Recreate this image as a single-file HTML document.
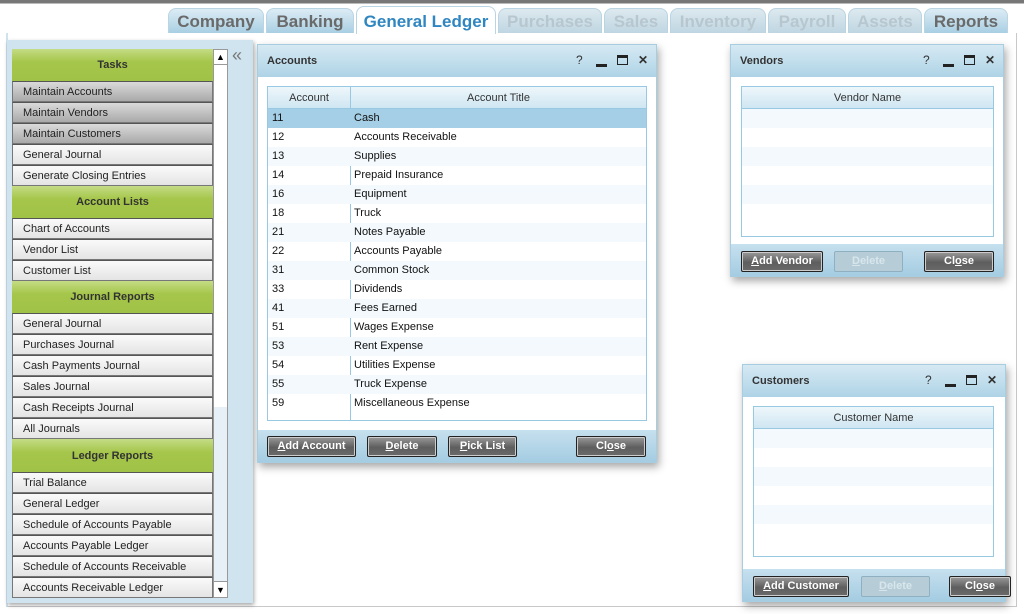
<!DOCTYPE html>
<html><head><meta charset="utf-8"><style>
*{margin:0;padding:0;box-sizing:border-box}
body{width:1024px;height:614px;background:#fff;font-family:"Liberation Sans",sans-serif;position:relative;overflow:hidden}
.abs{position:absolute}
.tab{position:absolute;top:8px;height:25px;border-radius:8px 8px 0 0;background:linear-gradient(#dcecf5,#a9cfe3);border:1px solid #b9d4e3;border-bottom:none;font-weight:bold;font-size:17px;text-align:center;line-height:25px;color:#6a6a6a}
.tab.dis{color:#b8c7cf;background:linear-gradient(#dde9ef,#bfd6e2)}
.tab.act{background:#fff;color:#2f86c0;top:6px;height:28px;line-height:29px}
.main{position:absolute;left:6px;top:33px;width:1011px;height:574px;border:1px solid #c8c8c8;border-top:none;border-left:2px solid #cfe3ef;background:#fff}
.side{position:absolute;left:7px;top:40px;width:246px;height:563px;background:#d0e4f0;box-shadow:1px 2px 4px rgba(0,0,0,.35)}
.list{position:absolute;left:12px;top:49px;width:216px;height:549px;background:#fff}
.hdr{position:absolute;left:12px;width:201px;height:32px;background:linear-gradient(#c4dc86,#a5c64b 40%,#a0c246);font-weight:bold;font-size:11px;color:#333;text-align:center;line-height:33px}
.it{position:absolute;left:12px;width:201px;height:21px;background:linear-gradient(#fafafa,#e4e4e4);border:1px solid #777;border-top:1px solid #555;font-size:11px;color:#222;padding-left:10px;line-height:20px}
.it.g{background:linear-gradient(#dadada,#a9a9a9)}
.win{position:absolute;background:#fff;box-shadow:2px 4px 8px rgba(0,0,0,.35);border:1px solid #a7cde0}
.tb{position:absolute;left:0;right:0;top:0;height:32px;background:linear-gradient(#d6e9f3,#aed3e6);font-weight:bold;font-size:11px;color:#333;line-height:32px;padding-left:9px}
.ctl{position:absolute;top:0;right:10px;width:70px;height:32px}
.ctl .q{position:absolute;left:0;top:0;font-weight:normal;font-size:12px;line-height:30px}
.ctl .mn{position:absolute;left:20px;top:19px;width:11px;height:3px;background:#222}
.ctl .mx{position:absolute;left:41px;top:10px;width:11px;height:10px;border:1.5px solid #222;border-top-width:3px}
.ctl .x{position:absolute;left:62px;top:0;font-size:12px;line-height:30px}
.bb{position:absolute;left:0;right:0;bottom:0;height:32px;background:linear-gradient(#c6e0ee,#a4cce2)}
.btn{position:absolute;height:21px;border:1px solid #222;border-radius:2px;background:linear-gradient(#9a9a9a,#5e5e5e 55%,#6a6a6a);color:#fff;font-weight:bold;font-size:11px;text-align:center;line-height:19px;box-shadow:inset 0 0 0 1px #ccc}
.btn.d{background:#b6cdd8;border-color:#8fb0c0;color:#d8e6ec;box-shadow:none}
.tbl{position:absolute;border:1px solid #98c9e2;background:#fff}
.th{height:22px;background:linear-gradient(#eef7fb,#cfe6f2);border-bottom:1px solid #98c9e2;font-size:11px;color:#333;text-align:center;line-height:22px}
.row{height:19px;font-size:11px;color:#111;line-height:19px;position:relative}
.row:nth-child(odd){background:#f3f9fc}
u{text-decoration:underline}
</style></head><body>
<div class="abs" style="left:0;top:0;width:1024px;height:3px;background:#777"></div>
<div class="abs" style="left:0;top:3px;width:1024px;height:1px;background:#bbb"></div>
<div class="main"></div>
<div class="tab" style="left:168px;width:96px">Company</div>
<div class="tab" style="left:266px;width:88px">Banking</div>
<div class="tab act" style="left:356px;width:140px">General Ledger</div>
<div class="tab dis" style="left:498px;width:104px">Purchases</div>
<div class="tab dis" style="left:604px;width:64px">Sales</div>
<div class="tab dis" style="left:670px;width:96px">Inventory</div>
<div class="tab dis" style="left:768px;width:78px">Payroll</div>
<div class="tab dis" style="left:848px;width:74px">Assets</div>
<div class="tab" style="left:924px;width:84px">Reports</div>

<div class="side"></div>
<div class="list"></div>
<div class="abs" style="left:213px;top:49px;width:15px;height:549px;background:#e6f0f6;border:1px solid #999"></div>
<div class="abs" style="left:214px;top:50px;width:13px;height:357px;background:#fff"></div>
<div class="abs" style="left:214px;top:50px;width:13px;height:15px;font-size:9px;text-align:center;line-height:15px;border-bottom:1px solid #999">▲</div>
<div class="abs" style="left:214px;top:581px;width:13px;height:16px;font-size:9px;text-align:center;line-height:16px;border-top:1px solid #999;background:#fff">▼</div>
<div class="abs" style="left:232px;top:46px;font-size:18px;color:#777;line-height:18px">«</div>

<div class="hdr" style="top:49px">Tasks</div>
<div class="it g" style="top:81px">Maintain Accounts</div>
<div class="it g" style="top:102px">Maintain Vendors</div>
<div class="it g" style="top:123px">Maintain Customers</div>
<div class="it" style="top:144px">General Journal</div>
<div class="it" style="top:165px">Generate Closing Entries</div>
<div class="hdr" style="top:186px">Account Lists</div>
<div class="it" style="top:218px">Chart of Accounts</div>
<div class="it" style="top:239px">Vendor List</div>
<div class="it" style="top:260px">Customer List</div>
<div class="hdr" style="top:281px">Journal Reports</div>
<div class="it" style="top:313px">General Journal</div>
<div class="it" style="top:334px">Purchases Journal</div>
<div class="it" style="top:355px">Cash Payments Journal</div>
<div class="it" style="top:376px">Sales Journal</div>
<div class="it" style="top:397px">Cash Receipts Journal</div>
<div class="it" style="top:418px">All Journals</div>
<div class="hdr" style="top:439px;height:33px;line-height:34px">Ledger Reports</div>
<div class="it" style="top:472px">Trial Balance</div>
<div class="it" style="top:493px">General Ledger</div>
<div class="it" style="top:514px">Schedule of Accounts Payable</div>
<div class="it" style="top:535px">Accounts Payable Ledger</div>
<div class="it" style="top:556px">Schedule of Accounts Receivable</div>
<div class="it" style="top:577px">Accounts Receivable Ledger</div>

<!-- Accounts -->
<div class="win" style="left:257px;top:44px;width:400px;height:419px">
<div class="tb">Accounts<span class="ctl"><span class="q">?</span><span class="mn"></span><span class="mx"></span><span class="x">✕</span></span></div>
<div class="tbl" style="left:9px;top:41px;width:380px;height:335px">
<div class="abs" style="left:82px;top:0;width:1px;height:333px;background:#98c9e2"></div>
<div class="th"><span style="position:absolute;left:0;width:82px">Account</span><span style="position:absolute;left:83px;right:0">Account Title</span></div>
<div>
<div class="row" style="background:#a5cfe6"><span style="position:absolute;left:4px">11</span><span style="position:absolute;left:86px">Cash</span></div>
<div class="row" style="background:#fff"><span style="position:absolute;left:4px">12</span><span style="position:absolute;left:86px">Accounts Receivable</span></div>
<div class="row"><span style="position:absolute;left:4px">13</span><span style="position:absolute;left:86px">Supplies</span></div>
<div class="row"><span style="position:absolute;left:4px">14</span><span style="position:absolute;left:86px">Prepaid Insurance</span></div>
<div class="row"><span style="position:absolute;left:4px">16</span><span style="position:absolute;left:86px">Equipment</span></div>
<div class="row"><span style="position:absolute;left:4px">18</span><span style="position:absolute;left:86px">Truck</span></div>
<div class="row"><span style="position:absolute;left:4px">21</span><span style="position:absolute;left:86px">Notes Payable</span></div>
<div class="row"><span style="position:absolute;left:4px">22</span><span style="position:absolute;left:86px">Accounts Payable</span></div>
<div class="row"><span style="position:absolute;left:4px">31</span><span style="position:absolute;left:86px">Common Stock</span></div>
<div class="row"><span style="position:absolute;left:4px">33</span><span style="position:absolute;left:86px">Dividends</span></div>
<div class="row"><span style="position:absolute;left:4px">41</span><span style="position:absolute;left:86px">Fees Earned</span></div>
<div class="row"><span style="position:absolute;left:4px">51</span><span style="position:absolute;left:86px">Wages Expense</span></div>
<div class="row"><span style="position:absolute;left:4px">53</span><span style="position:absolute;left:86px">Rent Expense</span></div>
<div class="row"><span style="position:absolute;left:4px">54</span><span style="position:absolute;left:86px">Utilities Expense</span></div>
<div class="row"><span style="position:absolute;left:4px">55</span><span style="position:absolute;left:86px">Truck Expense</span></div>
<div class="row"><span style="position:absolute;left:4px">59</span><span style="position:absolute;left:86px">Miscellaneous Expense</span></div>
</div></div>
<div class="bb">
<div class="btn" style="left:9px;top:6px;width:89px"><u>A</u>dd Account</div>
<div class="btn" style="left:109px;top:6px;width:70px"><u>D</u>elete</div>
<div class="btn" style="left:190px;top:6px;width:69px"><u>P</u>ick List</div>
<div class="btn" style="left:318px;top:6px;width:70px">Cl<u>o</u>se</div>
</div></div>

<!-- Vendors -->
<div class="win" style="left:730px;top:44px;width:274px;height:233px">
<div class="tb">Vendors<span class="ctl"><span class="q">?</span><span class="mn"></span><span class="mx"></span><span class="x">✕</span></span></div>
<div class="tbl" style="left:10px;top:41px;width:253px;height:151px"><div class="th">Vendor Name</div>
<div><div class="row"></div><div class="row"></div><div class="row"></div><div class="row"></div><div class="row"></div><div class="row"></div></div></div>
<div class="bb">
<div class="btn" style="left:10px;top:7px;width:82px"><u>A</u>dd Vendor</div>
<div class="btn d" style="left:103px;top:7px;width:69px"><u>D</u>elete</div>
<div class="btn" style="left:193px;top:7px;width:70px">Cl<u>o</u>se</div>
</div></div>

<!-- Customers -->
<div class="win" style="left:742px;top:364px;width:264px;height:238px">
<div class="tb">Customers<span class="ctl"><span class="q">?</span><span class="mn"></span><span class="mx"></span><span class="x">✕</span></span></div>
<div class="tbl" style="left:10px;top:41px;width:241px;height:151px"><div class="th">Customer Name</div>
<div><div class="row"></div><div class="row"></div><div class="row"></div><div class="row"></div><div class="row"></div><div class="row"></div></div></div>
<div class="bb">
<div class="btn" style="left:10px;top:7px;width:96px"><u>A</u>dd Customer</div>
<div class="btn d" style="left:118px;top:7px;width:69px"><u>D</u>elete</div>
<div class="btn" style="left:206px;top:7px;width:62px">Cl<u>o</u>se</div>
</div></div>
</body></html>
